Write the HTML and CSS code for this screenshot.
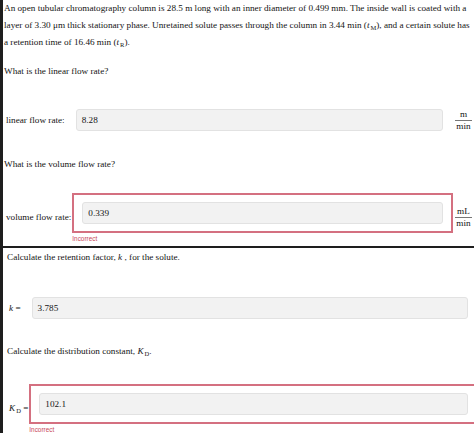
FILE: index.html
```html
<!DOCTYPE html>
<html>
<head>
<meta charset="utf-8">
<link rel="stylesheet" href="styles.css">
</head>
<body>
<div class="page">
  <section class="part">
    <p class="intro">An open tubular chromatography column is 28.5 m long with an inner diameter of 0.499 mm. The inside wall is coated with a layer of 3.30 μm thick stationary phase. Unretained solute passes through the column in 3.44 min (<i class="var">t</i><sub>M</sub>), and a certain solute has a retention time of 16.46 min (<i class="var">t</i><sub>R</sub>).</p>
    <p class="q q-first">What is the linear flow rate?</p>
    <div class="row">
      <span class="label">linear flow rate:</span>
      <div class="field">
        <div class="box"><div class="input">8.28</div></div>
      </div>
      <span class="frac"><span class="num">m</span><span class="den">min</span></span>
    </div>
    <p class="q">What is the volume flow rate?</p>
    <div class="row row-last">
      <span class="label">volume flow rate:</span>
      <div class="field wrong">
        <div class="box"><div class="input">0.339</div></div>
        <div class="msg">Incorrect</div>
      </div>
      <span class="frac"><span class="num">mL</span><span class="den">min</span></span>
    </div>
  </section>
  <div class="divider"></div>
  <section class="part part-two">
    <p class="q q-top">Calculate the retention factor, <i>k</i> , for the solute.</p>
    <div class="row row-wide">
      <span class="label label-math"><i>k</i> =</span>
      <div class="field">
        <div class="box"><div class="input">3.785</div></div>
      </div>
    </div>
    <p class="q">Calculate the distribution constant, <i class="var">K</i><sub>D</sub>.</p>
    <div class="row row-wide row-end">
      <span class="label label-math"><i class="var">K</i><sub>D</sub> =</span>
      <div class="field wrong">
        <div class="box"><div class="input">102.1</div></div>
        <div class="msg">Incorrect</div>
      </div>
    </div>
  </section>
</div>
</body>
</html>
```
FILE: styles.css
```css
html, body {
  margin: 0;
  padding: 0;
  background: #ffffff;
}
body {
  font-family: "Liberation Serif", "Times New Roman", serif;
  font-size: 9.2px;
  color: #141414;
  overflow: hidden;
}
.page {
  border-left: 3px solid #1e1e1e;
  min-height: 433px;
  box-sizing: border-box;
  overflow: hidden;
}
.part {
  padding-left: 1px;
}
p {
  margin: 0;
  line-height: 17px;
}
.var {
  display: inline-block;
  line-height: 10px;
  padding-right: 0.5px;
}
sub {
  display: inline-block;
  font-size: 6.5px;
  line-height: 7px;
  vertical-align: -2px;
  margin-left: 0.5px;
}
.intro {
  padding-right: 2px;
}
.q-first {
  margin-top: 11.5px;
}
.q-top {
  margin-top: 1.5px;
  padding-left: 3px;
}
.part-two .q {
  padding-left: 3px;
}
.row {
  display: flex;
  align-items: center;
  margin: 20px 0 15px;
  padding-left: 2px;
}
.row-last {
  margin-bottom: 4px;
}
.row-wide {
  margin-right: -4px;
  margin-top: 21px;
}
.row-end {
  margin-top: 24px;
}
.label {
  white-space: nowrap;
  margin-right: 1px;
}
.label-math {
  padding-left: 3px;
}
.field {
  flex: 1;
  display: flex;
  flex-direction: column;
}
.box {
  border: 2px solid transparent;
  padding: 7.5px 8px;
}
.wrong .box {
  border-color: #d47080;
  padding: 7px 8px;
}
.input {
  height: 20px;
  line-height: 20px;
  background: #f2f2f2;
  border: 1px solid #e2e2e2;
  border-radius: 3px;
  padding-left: 5px;
}
.msg {
  font-family: "Liberation Sans", Arial, sans-serif;
  font-size: 6.4px;
  line-height: 7px;
  color: #c9485a;
  margin-top: 2px;
}
.frac {
  width: 21px;
  display: flex;
  flex-direction: column;
  align-items: center;
  font-size: 9.2px;
  line-height: 11px;
}
.frac .num {
  padding: 0 1px;
}
.frac .den {
  border-top: 1px solid #777777;
  padding: 0 1px;
}
.divider {
  height: 2px;
  background: #1e1e1e;
  margin-left: -3px;
}
```
